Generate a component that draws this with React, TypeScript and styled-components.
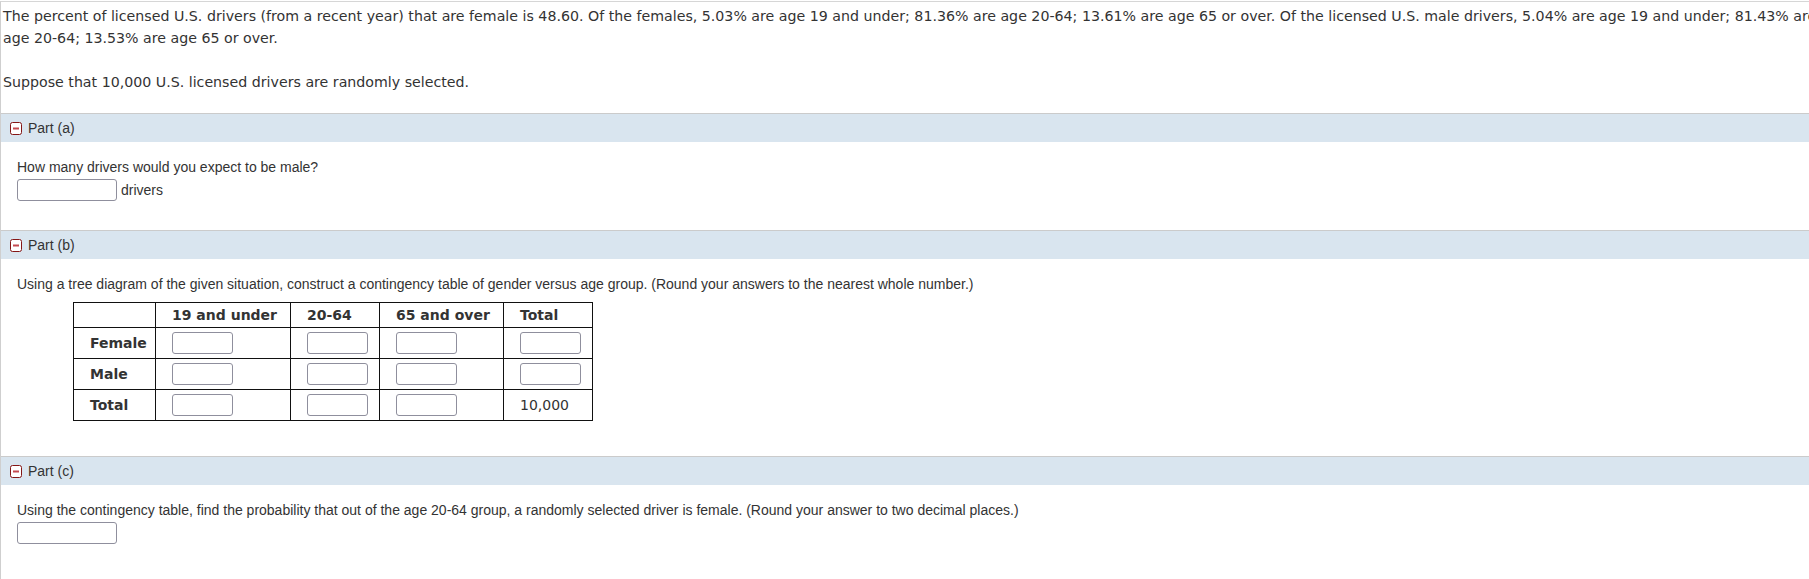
import React from "react";
import styled, { createGlobalStyle } from "styled-components";

const GlobalStyle = createGlobalStyle`
  html, body {
    margin: 0;
    padding: 0;
    background: #fff;
    overflow: hidden;
  }
  body {
    font-family: "Liberation Sans", Arial, sans-serif;
    color: #333;
  }
`;

const Page = styled.div`
  margin: 1px 0 0 0;
  border-left: 1px solid #cfcfcf;
  border-top: 1px solid #d6d6d6;
  min-height: 600px;
`;

const Intro = styled.div`
  padding: 3px 0 0 2px;
  font-family: Verdana, "DejaVu Sans", sans-serif;
  font-size: 14.2px;
  line-height: 22px;
  color: #333;
  white-space: nowrap;
  margin-bottom: 20px;
`;

const PartHeader = styled.div`
  display: flex;
  align-items: center;
  gap: 6px;
  height: 28px;
  padding-left: 9px;
  border-top: 1px solid #cbcbcb;
  background: #d9e5ef;
  font-size: 14px;
  color: #333;
`;

const PartBody = styled.div<{ $bottom: number }>`
  padding: 16px 0 ${(p) => p.$bottom}px 16px;
  font-size: 14px;
  line-height: 18px;
  color: #333;
`;

const Question = styled.div`
  line-height: 18px;
`;

const AnswerRow = styled.div`
  display: flex;
  align-items: center;
  gap: 4px;
  margin-top: 2px;
  height: 23px;
`;

const Field = styled.input<{ $w: number }>`
  box-sizing: border-box;
  width: ${(p) => p.$w}px;
  height: 22px;
  margin: 0;
  border: 1px solid #8f8f9d;
  border-radius: 3px;
  background: #fff;
  outline: none;
`;

const Table = styled.table`
  border-collapse: collapse;
  margin: 9px 0 6px 56px;
  font-family: Verdana, "DejaVu Sans", sans-serif;
  font-size: 14px;
  color: #333;
`;

const Th = styled.th<{ $w: number }>`
  box-sizing: border-box;
  width: ${(p) => p.$w}px;
  height: 25px;
  padding: 0 0 0 16px;
  border: 1px solid #111;
  text-align: left;
  font-weight: bold;
`;

const RowHead = styled.th`
  height: 30px;
  padding: 0 0 0 16px;
  border: 1px solid #111;
  text-align: left;
  font-weight: bold;
`;

const Td = styled.td`
  height: 30px;
  padding: 0 0 0 16px;
  border: 1px solid #111;
  vertical-align: middle;
  line-height: 0;
`;

const TdText = styled.td`
  height: 30px;
  padding: 0 0 0 16px;
  border: 1px solid #111;
`;

const MinusIcon = () => (
  <svg width="12" height="13" viewBox="0 0 12 13">
    <rect x="0.5" y="0.5" width="11" height="12" rx="2" fill="#fff" stroke="#841616" />
    <rect x="3" y="5.5" width="6" height="2" fill="#c44a50" />
  </svg>
);

const Part = ({ label }: { label: string }) => (
  <PartHeader>
    <MinusIcon />
    <span>{label}</span>
  </PartHeader>
);

const cols = ["19 and under", "20-64", "65 and over", "Total"];
const widths = [82, 135, 89, 124, 89];

const App = () => {
  return (
    <>
      <GlobalStyle />
      <Page>
        <Intro>
          The percent of licensed U.S. drivers (from a recent year) that are female is 48.60. Of the females, 5.03% are
          age 19 and under; 81.36% are age 20-64; 13.61% are age 65 or over. Of the licensed U.S. male drivers, 5.04% are
          age 19 and under; 81.43% are
          <br />
          age 20-64; 13.53% are age 65 or over.
          <br />
          <br />
          Suppose that 10,000 U.S. licensed drivers are randomly selected.
        </Intro>

        <Part label="Part (a)" />
        <PartBody $bottom={29}>
          <Question>How many drivers would you expect to be male?</Question>
          <AnswerRow>
            <Field $w={100} />
            <span>drivers</span>
          </AnswerRow>
        </PartBody>

        <Part label="Part (b)" />
        <PartBody $bottom={29}>
          <Question>
            Using a tree diagram of the given situation, construct a contingency table of gender versus age group. (Round
            your answers to the nearest whole number.)
          </Question>
          <Table>
            <thead>
              <tr>
                <Th $w={widths[0]} />
                {cols.map((c, i) => (
                  <Th key={c} $w={widths[i + 1]}>
                    {c}
                  </Th>
                ))}
              </tr>
            </thead>
            <tbody>
              {["Female", "Male", "Total"].map((row) => (
                <tr key={row}>
                  <RowHead>{row}</RowHead>
                  <Td>
                    <Field $w={61} />
                  </Td>
                  <Td>
                    <Field $w={61} />
                  </Td>
                  <Td>
                    <Field $w={61} />
                  </Td>
                  {row === "Total" ? (
                    <TdText>10,000</TdText>
                  ) : (
                    <Td>
                      <Field $w={61} />
                    </Td>
                  )}
                </tr>
              ))}
            </tbody>
          </Table>
        </PartBody>

        <Part label="Part (c)" />
        <PartBody $bottom={29}>
          <Question>
            Using the contingency table, find the probability that out of the age 20-64 group, a randomly selected driver
            is female. (Round your answer to two decimal places.)
          </Question>
          <AnswerRow>
            <Field $w={100} />
          </AnswerRow>
        </PartBody>
      </Page>
    </>
  );
};

export default App;
